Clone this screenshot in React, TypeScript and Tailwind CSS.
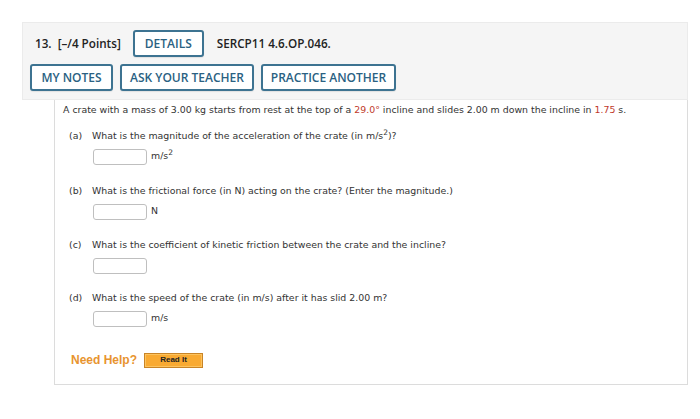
import React from "react";

const body = { fontFamily: '"DejaVu Sans", Verdana, sans-serif' };
const head = { fontFamily: '"Open Sans", "Noto Sans", sans-serif' };

function Btn({ children, w }: { children: React.ReactNode; w: string }) {
  return (
    <div
      className={`h-[27px] ${w} flex items-center justify-center border-2 border-[#3d7391] rounded-[3px] bg-white text-[12px] font-semibold text-[#2a6182] shadow-[0_1px_1px_rgba(0,0,0,0.08)]`}
      style={head}
    >
      {children}
    </div>
  );
}

function Input() {
  return <div className="w-[54px] h-[16px] border border-[#bfbfbf] rounded-[3px] bg-white" />;
}

function Part({ label, q, unit, mt }: { label: string; q: React.ReactNode; unit?: React.ReactNode; mt: string }) {
  return (
    <div className={mt}>
      <div className="flex h-[14px] items-center text-[9.4px] text-[#333]">
        <span className="w-[29px] pl-[6px]">{label}</span>
        <span>{q}</span>
      </div>
      <div className="mt-[6px] ml-[30px] flex items-start">
        <Input />
        {unit && <span className="ml-[4px] text-[9.4px] text-[#333] leading-[14px]">{unit}</span>}
      </div>
    </div>
  );
}

export default function App() {
  return (
    <div className="w-[700px] h-[419px] bg-white pt-[22px] pl-[22px]">
      <div className="w-[666px]">
        <div className="bg-[#f5f5f5] border border-[#ebebeb] pt-[7px] pb-[8px] pl-[7px]" style={head}>
          <div className="flex items-center h-[27px]">
            <span className="ml-[5px] text-[11.7px] font-semibold text-[#222]">13.&nbsp; [–/4 Points]</span>
            <div className="ml-[12px]"><Btn w="w-[71px]">DETAILS</Btn></div>
            <span className="ml-[13px] text-[11.7px] font-semibold text-[#222]">SERCP11 4.6.OP.046.</span>
          </div>
          <div className="flex items-center gap-[7px] mt-[7px]">
            <Btn w="w-[83px]">MY NOTES</Btn>
            <Btn w="w-[134px]">ASK YOUR TEACHER</Btn>
            <Btn w="w-[135px]">PRACTICE ANOTHER</Btn>
          </div>
        </div>
        <div className="ml-[32px] h-[285px] border border-t-0 border-[#dcdcdc] bg-white pl-[8px]" style={body}>
          <div className="pt-[3px] h-[17px] leading-[14px] text-[9.4px] text-[#333]">
            A crate with a mass of 3.00 kg starts from rest at the top of a <span className="text-[#c0392b]">29.0°</span> incline and slides 2.00 m down the incline in <span className="text-[#c0392b]">1.75</span> s.
          </div>
          <Part
            label="(a)"
            mt="mt-[12px]"
            q={<>What is the magnitude of the acceleration of the crate (in m/s<sup className="text-[7.5px]">2</sup>)?</>}
            unit={<>m/s<sup className="text-[7.5px]">2</sup></>}
          />
          <Part label="(b)" mt="mt-[19px]" q="What is the frictional force (in N) acting on the crate? (Enter the magnitude.)" unit="N" />
          <Part label="(c)" mt="mt-[18px]" q="What is the coefficient of kinetic friction between the crate and the incline?" />
          <Part label="(d)" mt="mt-[17px]" q="What is the speed of the crate (in m/s) after it has slid 2.00 m?" unit="m/s" />
          <div className="mt-[24px] ml-[8px] flex items-center" style={{ fontFamily: '"Liberation Sans", Arial, sans-serif' }}>
            <span className="text-[12px] font-bold text-[#e8942f]">Need Help?</span>
            <div className="ml-[7px] w-[59px] h-[15px] bg-[#f9aa32] border border-[#c98426] shadow-[inset_0_0_0_1px_#fcc35e] flex items-center justify-center text-[8px] font-bold text-[#222]">
              Read It
            </div>
          </div>
        </div>
      </div>
    </div>
  );
}
